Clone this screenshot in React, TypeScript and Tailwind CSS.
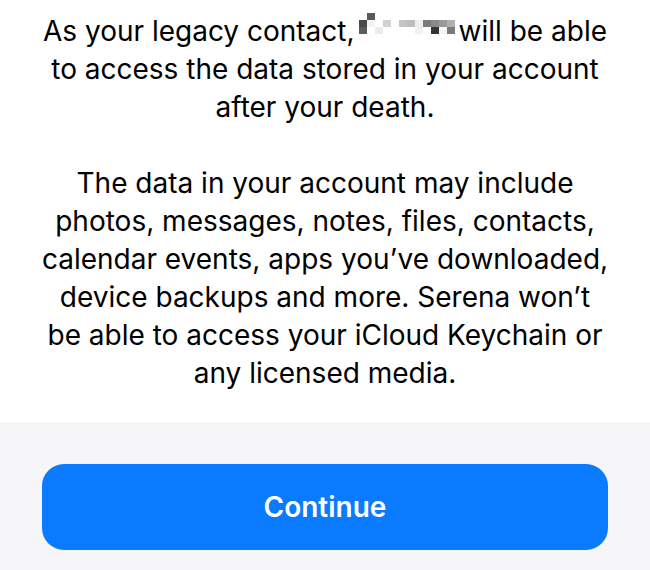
import React from "react"

// pixelated name blur, 3 rows x 12 cols
const blur = [
  ["#fff", "#5a5a5a", "#fff", "#fff", "#fff", "#fff", "#fff", "#fff", "#fff", "#fff", "#fff", "#fff"],
  ["#4a4a4a", "#f4f4f4", "#fff", "#d2d2d2", "#fff", "#c4c4c4", "#bdbdbd", "#eeeeee", "#7c7c7c", "#8a8a8a", "#9a9a9a", "#b0b0b0"],
  ["#5c5c5c", "#fff", "#ececec", "#fff", "#fff", "#fff", "#fff", "#f0f0f0", "#fff", "#353535", "#f5f5f5", "#7a7a7a"],
]

function BlurredName() {
  return (
    <span className="inline-grid grid-cols-[repeat(12,8px)] grid-rows-[repeat(3,7px)] align-top mt-[1px] mx-[4px]">
      {blur.flat().map((c, i) => (
        <span key={i} style={{ backgroundColor: c }} />
      ))}
    </span>
  )
}

export default function App() {
  return (
    <div className="w-[650px] h-[570px] flex flex-col bg-white font-['Inter',sans-serif] text-black">
      <div className="h-[422px] pt-[12px] text-center text-[28px] leading-[38px]">
        <p>
          As your legacy contact,
          <BlurredName />
          will be able
          <br />
          to access the data stored in your account
          <br />
          after your death.
        </p>
        <p className="mt-[38px]">
          The data in your account may include
          <br />
          photos, messages, notes, files, contacts,
          <br />
          calendar events, apps you’ve downloaded,
          <br />
          device backups and more. Serena won’t
          <br />
          be able to access your iCloud Keychain or
          <br />
          any licensed media.
        </p>
      </div>
      <div className="flex-1 bg-[#f6f6f8] px-[42px] pt-[42px]">
        <button className="w-full h-[86px] rounded-[22px] bg-[#0a7aff] text-white text-[28px] font-semibold">
          Continue
        </button>
      </div>
    </div>
  )
}
